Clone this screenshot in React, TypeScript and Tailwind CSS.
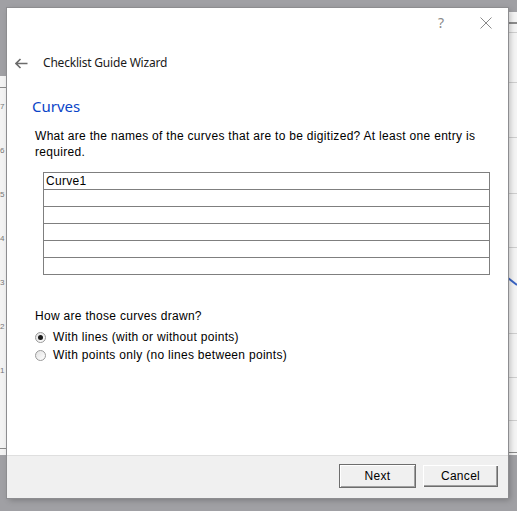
import React from "react";

const gulim = { fontFamily: '"Liberation Sans", Arial, sans-serif', letterSpacing: "0.3px" };

function Radio({ checked }: { checked: boolean }) {
  return (
    <span className="relative flex h-[11px] w-[11px] shrink-0 items-center justify-center rounded-full border border-[#9a9a9a] bg-gradient-to-br from-[#e2e2e2] to-[#ffffff]">
      {checked && <span className="h-[5px] w-[5px] rounded-full bg-[#1a1a1a]" />}
    </span>
  );
}

export default function App() {
  const rows = ["Curve1", "", "", "", "", ""];
  return (
    <div className="relative h-[511px] w-[517px] overflow-hidden bg-[#a0a0a4]">
      {/* application behind the dialog: left edge */}
      <div className="absolute left-0 top-[76px] h-[379px] w-[7px] overflow-hidden bg-[#f3f3f3]">
        <div className="absolute left-0 top-[11px] h-[1px] w-[7px] bg-[#8a8a8a]" />
        <div className="absolute left-[6px] top-0 h-full w-[1px] bg-[#d6d6d6]" />
        {["7", "6", "5", "4", "3", "2", "1"].map((d, i) => (
          <span
            key={d}
            className="absolute left-0 text-[8px] leading-none text-[#777]"
            style={{ top: 27 + i * 44, fontFamily: '"Liberation Sans", sans-serif' }}
          >
            {d}
          </span>
        ))}
        <div className="absolute left-0 top-[372px] h-[1px] w-[7px] bg-[#8a8a8a]" />
      </div>
      {/* application behind the dialog: right edge */}
      <div className="absolute left-[508px] top-[12px] h-[443px] w-[9px] overflow-hidden bg-[#f5f5f5]">
        <div className="absolute left-0 top-[10px] h-[2px] w-full bg-[#8c8c8c]" />
        {[20, 70, 125, 181, 235, 321, 365, 408].map((y) => (
          <div key={y} className="absolute left-0 h-[1px] w-full bg-[#cfcfcf]" style={{ top: y }} />
        ))}
        <svg className="absolute left-0 top-[265px]" width="9" height="10">
          <path d="M0 1 L9 8" stroke="#3a64c4" strokeWidth="2" />
        </svg>
        <div className="absolute left-0 top-[440px] h-[1px] w-full bg-[#8a8a8a]" />
      </div>

      {/* dialog */}
      <div className="absolute left-[7px] top-[8px] flex h-[490px] w-[501px] flex-col bg-white shadow-[0_0_0_1px_#8d8d90,2px_2px_6px_rgba(0,0,0,0.25)]">
        {/* title bar */}
        <div className="flex h-[30px] items-center justify-end pr-[16px]">
          <span
            className="mr-[36px] text-[14px] leading-none text-[#8a8a8a]"
            style={{ fontFamily: '"Noto Sans", sans-serif' }}
          >
            ?
          </span>
          <svg width="12" height="12" viewBox="0 0 12 12">
            <path d="M0.5 0.5 L11.5 11.5 M11.5 0.5 L0.5 11.5" stroke="#8a8a8a" strokeWidth="1" />
          </svg>
        </div>

        {/* wizard header */}
        <div className="mt-[16px] flex h-[18px] items-center">
          <svg className="ml-[8px]" width="13" height="11" viewBox="0 0 13 11">
            <path d="M1 5.5 H12.5 M5.5 1 L1 5.5 L5.5 10" stroke="#6b6b6b" strokeWidth="1.6" fill="none" />
          </svg>
          <span
            className="ml-[15px] text-[12px] leading-none tracking-[-0.2px] text-[#1a1a1a]"
            style={{ fontFamily: '"Noto Sans", sans-serif' }}
          >
            Checklist Guide Wizard
          </span>
        </div>

        {/* page */}
        <div className="flex flex-1 flex-col pl-[25px]">
          <div
            className="mt-[25px] text-[15px] leading-[18px] text-[#0a45c8]"
            style={{ fontFamily: '"Noto Sans", sans-serif' }}
          >
            Curves
          </div>
          <div className="ml-[3px] mt-[13px] whitespace-nowrap text-[12px] leading-[16px] text-black" style={gulim}>
            What are the names of the curves that are to be digitized? At least one entry is
            <br />
            required.
          </div>

          <div className="ml-[11px] mt-[12px] flex w-[447px] flex-col border border-[#7f7f7f]">
            {rows.map((r, i) => (
              <div
                key={i}
                className={`flex items-center pl-[2px] text-[12px] text-black ${i < rows.length - 1 ? "h-[17px] border-b border-[#7f7f7f]" : "h-[16px]"}`}
                style={gulim}
              >
                {r}
              </div>
            ))}
          </div>

          <div className="ml-[3px] mt-[33px] text-[12px] leading-[16px] text-black" style={gulim}>
            How are those curves drawn?
          </div>
          <div className="ml-[3px] mt-[4px] flex h-[18px] items-center gap-[7px] text-[12px] text-black" style={gulim}>
            <Radio checked />
            <span>With lines (with or without points)</span>
          </div>
          <div className="ml-[3px] flex h-[18px] items-center gap-[7px] text-[12px] text-black" style={gulim}>
            <Radio checked={false} />
            <span>With points only (no lines between points)</span>
          </div>
        </div>

        {/* footer */}
        <div className="flex h-[43px] items-start justify-end gap-[7px] border-t border-[#dfdfdf] bg-[#f0f0f0] pr-[10px] pt-[8px]">
          <button
            className="flex h-[24px] w-[77px] items-center justify-center border border-[#6d6d6d] bg-[#f0f0f0] text-[12px] text-black shadow-[inset_1px_1px_0_#ffffff,inset_-1px_-1px_0_#a0a0a0]"
            style={gulim}
          >
            Next
          </button>
          <button
            className="mt-[1px] flex h-[22px] w-[75px] items-center justify-center bg-[#f0f0f0] text-[12px] text-black shadow-[inset_1px_1px_0_#ffffff,inset_-1px_-1px_0_#6d6d6d,inset_-2px_-2px_0_#a0a0a0]"
            style={gulim}
          >
            Cancel
          </button>
        </div>
      </div>
    </div>
  );
}
